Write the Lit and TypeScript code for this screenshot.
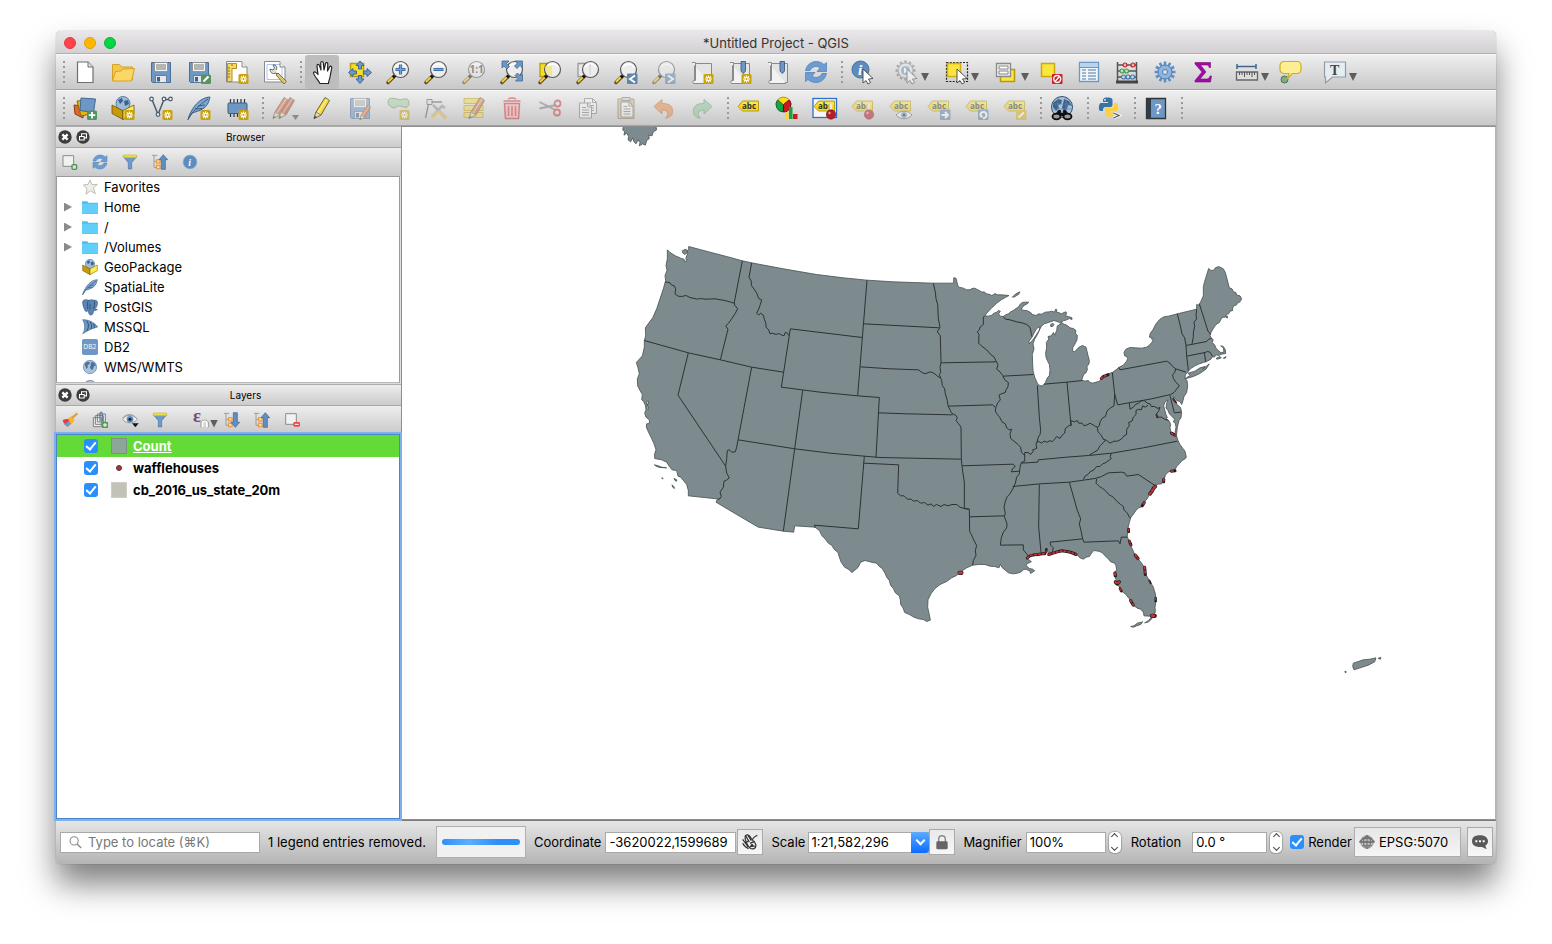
import { LitElement, html, svg, css, nothing } from "lit";
import { customElement, property } from "lit/decorators.js";
import { classMap } from "lit/directives/class-map.js";

/* ---------- shared icon parts ---------- */

const lens = (inner: unknown = nothing) => svg`
  <path d="M2 22.500L8 16.500" stroke="#5d5226" stroke-width="3.600" stroke-linecap="round"/>
  <path d="M2 22L7 17" stroke="#f7cf3a" stroke-width="2"/>
  <path d="M7 17.500L9.500 15" stroke="#111" stroke-width="3"/>
  <circle cx="14.500" cy="9.500" r="8" fill="#ededed" stroke="#5a5a5a" stroke-width="1.200"/>
  <path d="M9 7a6.500 6.500 0 0 1 11 0" fill="none" stroke="#fff" stroke-width="1.500"/>${inner}`;

const badge = svg`
  <rect x="13.500" y="14" width="10" height="10" rx="1.500" fill="#c9a20a"/>
  <path d="M18.500 15.500v7M15 19h7M16 16.500l5 5M21 16.500l-5 5" stroke="#fff" stroke-width="1.200"/>
  <circle cx="18.500" cy="19" r="1" fill="#c9a20a"/>`;

const tag = (text: string, extra: unknown = nothing) => svg`
  <path d="M1 10.500L5.500 5H21.500V15H5.500Z" fill="#f6d722" stroke="#b99b10"/>
  <path d="M6 6h15v3H5z" fill="#fbe96a" opacity=".7"/>
  <text x="5" y="13" class="tagText">${text}</text>${extra}`;

const floppy = svg`
  <path d="M2.500 2.500h19v20h-18l-1-1z" fill="#6d97c4" stroke="#4b6f95"/>
  <path d="M5.500 2.500h13v9h-13z" fill="#f3f3f0" stroke="#8a8a85" stroke-width=".8"/>
  <path d="M7 5h10M7 7h10M7 9h10" stroke="#777" stroke-width="1"/>
  <path d="M6.500 15.500h11v7h-11z" fill="#e8e8e6" stroke="#4b6f95" stroke-width=".8"/>
  <path d="M8 17h3v4.500h-3z" fill="#3f618a"/>`;

const globe = svg`
  <circle cx="12" cy="12" r="10" fill="#a9c3dd" stroke="#5a80aa"/>
  <path d="M4 7l4-3 4 1-1 3-3 1 1 3-2 3-2-4zM14 4l5 2 2 5-3-1-1 4-2 3-3-4 1-4z" fill="#4b709a"/>`;

const cursor = svg`<path d="M12 9v14l3-2.500 2 3.500 2.500-1.400-2-3.600 4.500-.5z" fill="#fff" stroke="#444" stroke-width=".9"/>`;

const gift = svg`
  <circle cx="12" cy="7.500" r="7" fill="#9dbcdc" stroke="#456a93" stroke-width=".8"/>
  <path d="M7 4l4-2 1 3-3 3zM13 5l4-1 1 4-4 2z" fill="#3d6189"/>
  <path d="M1 9l10.500 5.500L12 23.500 1 17.500z" fill="#c99a06" stroke="#6d5508" stroke-width=".8"/>
  <path d="M23 9l-11 5.500v9l11-6z" fill="#fbee55" stroke="#6d5508" stroke-width=".8"/>`;

const feather = svg`
  <path d="M1 23.500C3 16 8 8 14 4c3-2 7-3 9-3-1 4-2 8-6 11-4 3-9 4-12 5z" fill="#7ea6d0" stroke="#3c5f86"/>
  <path d="M1 23.500C5 16 12 9 21 3M8 13l7-.5M11 10l7-1" fill="none" stroke="#365476" stroke-width=".9"/>`;

const refresh = svg`
  <path d="M1.500 10.500C3 4 8 1.500 12 1.500c3 0 6 1 8 3l2.500-2V11.500h-9.500l3-3.500c-3-2.500-8-2-10 2.500z" fill="#6b9dd4" stroke="#4a7cb4" stroke-width=".7"/>
  <path d="M22.500 13.500c-1.500 6.500-6.500 9-10.500 9-3 0-6-1-8-3l-2.500 2V12.500h9.500l-3 3.500c3 2.500 8 2 10-2.500z" fill="#6b9dd4" stroke="#4a7cb4" stroke-width=".7"/>`;

const funnel = svg`
  <path d="M2 4h20l-7.500 9v9.500h-5V13z" fill="#6d9bcd" stroke="#4c76a4"/>
  <path d="M2 1.500h20v4H2z" fill="#f2dd3f" stroke="#c2ae22" stroke-width=".8"/>`;

const treeLines = svg`
  <path d="M0 2h8M3 2v18h5M3 11h5" fill="none" stroke="#999" stroke-width="1.400"/>
  <path d="M7 8.500h5v5H7zM7 17h5v5H7z" fill="#ffe1b5" stroke="#e8902a" stroke-width="1.600"/>`;

const pencil = (dx: number, fill: string) => svg`
  <g transform="translate(${dx} 0)">
    <path d="M4 22.500L6 16 15 1.500l4.500 3L11 19z" fill="${fill}" stroke="#5c5634" stroke-width=".9"/>
    <path d="M8 17L17 3" stroke="#fff" stroke-opacity=".5" stroke-width="1.300"/>
    <path d="M4 22.500L6 16l5 3z" fill="#e9d6ae" stroke="#665" stroke-width=".7"/>
    <path d="M4 22.500l.8-2.600 1.800 1.200z" fill="#222"/>
  </g>`;

const page = (x: number, y: number) => svg`
  <path d="M${x} ${y}h8l4 4v11h-12z" fill="#f3f3f1" stroke="#777"/>
  <path d="M${x + 8} ${y}v4h4M${x + 2.5} ${y + 7}h7M${x + 2.5} ${y + 9.500}h7M${x + 2.5} ${y + 12}h7M${x + 2.5} ${y + 4.500}h4" fill="none" stroke="#777"/>`;

const bookPage = svg`
  <path d="M4.500 3.500h17v19h-17z" fill="#e4e4e4" stroke="#8a8a8a"/>
  <path d="M2 2.500h3.500v18H3.500a2 2 0 0 0 0 3H20" fill="#f2f2f2" stroke="#8a8a8a"/>`;

const ribbon = (x: number) => svg`<path d="M${x} 1.500h4.500v9.500l-2.200 2.500-2.300-2.500z" fill="#6d97c4" stroke="#3c5f86" stroke-width=".9"/>`;

const pin = svg`
  <path d="M17.500 8v8" stroke="#eee" stroke-width="2.500"/><path d="M16 8v7" stroke="#777" stroke-width=".6"/>
  <circle cx="18" cy="18.500" r="4.700" fill="#b51d25" stroke="#7c1218" stroke-width=".6"/><circle cx="16.500" cy="17" r="1.200" fill="#e99"/>`;

const blueBox = (d: string) => svg`
  <rect x="13" y="13.500" width="10.500" height="10.500" rx="1" fill="#5e86ad"/><path d="${d}" fill="none" stroke="#fff" stroke-width="2"/>`;

const gearTeeth = (r1: number, r2: number) =>
  Array.from({ length: 12 }, (_, i) => {
    const a = (i * Math.PI) / 6;
    return `M${12 + r1 * Math.cos(a)} ${12 + r1 * Math.sin(a)}L${12 + r2 * Math.cos(a)} ${12 + r2 * Math.sin(a)}`;
  }).join("");

const ICONS: Record<string, unknown> = {
  newProject: svg`<path d="M4.500 2h10.500l5 5v15.500h-15.500z" fill="#fff" stroke="#6f6f6f" stroke-width="1.200"/><path d="M15 2v5h5" fill="#e4e4e4" stroke="#6f6f6f"/>`,
  open: svg`<path d="M1.500 20.500V4.500h7L10.500 7h11v13" fill="#f1c84b" stroke="#d5a321"/><path d="M1.500 21L4.500 11.500 10 11l2-2 11.500-.5L20.500 21z" fill="#fbd866" stroke="#d5a321"/>`,
  save: floppy,
  saveAs: svg`${floppy}<rect x="14" y="14.500" width="10" height="9.500" rx="1.500" fill="#5b9160"/><path d="M16.500 21.500l5-5" stroke="#fff" stroke-width="2.200"/>`,
  layout: svg`<path d="M1.500 1.500h15l5.500 5.500v15H1.500z" fill="#fff" stroke="#888"/><path d="M17 1.500V7h5" fill="#eee" stroke="#888"/><path d="M2.500 3.500h9v5H7v13H2.500z" fill="#f5d76a" stroke="#b98f1a"/><path d="M3 8h2M3 11h2M3 14h2M3 17h2M7 4v2" stroke="#8b6b12"/>${badge}`,
  layoutManager: svg`<path d="M1.500 1.500h15l5.500 5.500v15H1.500z" fill="#fff" stroke="#888"/><path d="M4 4.500h15v15H4z" fill="none" stroke="#a9c3ee"/><path d="M17 1.500V7h5" fill="#eee" stroke="#888"/><path d="M13 10c2-3 0-5.500-3-5l1.500 3-1.500 2-3-1c0 4 3 5.500 6 4l2.500 2.500" fill="#ddd" stroke="#666"/><path d="M15 13l8.500 8.500-2.500 2.500-8-9z" fill="#dcc675" stroke="#86712e"/>`,
  pan: svg`<path d="M9 23.500C7 20 3 15.500 2.500 13c.5-2 2.500-1 4.500 1.500L6 6c0-2 2-2 2.500-.3L10 10 9.700 3c.2-2 2.300-2 2.600 0L13 10l1.500-6.500c.7-1.700 2.500-1 2.300.8L16.500 11l2-4c1-1.500 2.500-.5 2.200 1L19 17c-.5 3-1.500 4-1.500 6.500z" fill="#fff" stroke="#222" stroke-width="1.200" stroke-linejoin="round" transform="translate(1 0)"/>`,
  panSelection: svg`<path d="M2.500 3.500h13v13h-13z" fill="#f7e11f" stroke="#bb9a10" stroke-width="1.500"/><path d="M12 1l4 4.500h-2.500V9h-3V5.500H8zM12 23.500l-4-4.500h2.500v-3.500h3V19H16zM.5 12.500L5 8.500V11h3.500v3H5v2.500zM23.500 12.500l-4.500-4V11h-3.500v3H19v2.500z" fill="#6d9bcd" stroke="#3c6796"/>`,
  zoomIn: lens(svg`<path d="M14.500 4.500v10M9.500 9.500h10" stroke="#3f6fa5" stroke-width="3.200"/><path d="M14.500 5v9M10 9.500h9" stroke="#79a4d4" stroke-width="1.200"/>`),
  zoomOut: lens(svg`<path d="M9.500 9.500h10" stroke="#3f6fa5" stroke-width="3"/><path d="M10 9.500h9" stroke="#79a4d4"/>`),
  zoomNative: lens(svg`<text x="7.500" y="13" class="bold9">1:1</text>`),
  zoomFull: lens(svg`<path d="M2 1h7L6.500 3.500l3 3-2.500 2.500-3-3L2 8zM22.500 1v7L20 5.500l-3 3L14.500 6l3-3L15 1zM22.500 21h-7l2.500-2.500-3-3 2.500-2.500 3 3 2-2z" fill="#6d97c4" stroke="#3f6894" stroke-width=".8"/>`),
  zoomSelection: svg`<path d="M2 3.500h12v13H2z" fill="#f7e11f" stroke="#bb9a10" stroke-width="1.300"/>${lens(svg`<path d="M7.500 6h6.500v10a8 8 0 0 1-6.500-10" fill="#f3e47a" opacity=".8"/>`)}`,
  zoomLayer: svg`<path d="M2 3.500h12v13H2z" fill="#e8e8e8" stroke="#999" stroke-width="1.300"/>${lens(svg`<path d="M14 4v11" stroke="#ccc"/>`)}`,
  zoomLast: lens(blueBox("M21 15.500L16 19l5 3.500")),
  zoomNext: lens(blueBox("M16 15.500L21 19l-5 3.500")),
  newBookmark: svg`${bookPage}${badge}`,
  newView: svg`${bookPage}${ribbon(13)}${badge}`,
  bookmarks: svg`${bookPage}${ribbon(14)}`,
  refresh,
  identify: svg`<circle cx="9.500" cy="9.500" r="8.500" fill="#5d8cc0" stroke="#43709f"/><text x="7" y="15" class="serifI">i</text>${cursor}`,
  action: svg`<path d="${gearTeeth(7, 10)}" transform="translate(-1.500 -1.500)" stroke="#777" stroke-width="2.500"/><circle cx="10.500" cy="10.500" r="7.500" fill="#e4e4e4" stroke="#888" stroke-width="1.200"/><circle cx="10.500" cy="10.500" r="4.500" fill="#6d97c4"/><path d="M9 7.500l4.500 3-4.500 3z" fill="#fff"/>${cursor}`,
  select: svg`<path d="M1.500 2.500h21v19h-21z" fill="none" stroke="#222" stroke-width="1.200" stroke-dasharray="2 1.300"/><path d="M2.500 3.500h13v13h-13z" fill="#fbe63e" stroke="#d2ae12" stroke-width="1.500"/>${cursor}`,
  selectForm: svg`<path d="M5.500 9.500h14v12h-14z" fill="#fbe63e" stroke="#b89812" stroke-width="1.500"/><path d="M1.500 3.500h14v13h-14z" fill="#eee" stroke="#8b8b8b" stroke-width="1.300"/><path d="M4 6h9v3H4zM4 11h9v3H4z" fill="#fff" stroke="#888"/>`,
  deselect: svg`<path d="M2.500 3.500h13v13h-13z" fill="#fbe63e" stroke="#c9a712" stroke-width="1.500"/><rect x="13" y="14" width="10.500" height="10" rx="1" fill="#d21f25"/><circle cx="18.200" cy="19" r="3.500" fill="none" stroke="#fff" stroke-width="1.400"/><path d="M16 21.500l4.500-5" stroke="#fff" stroke-width="1.300"/>`,
  table: svg`<path d="M2.500 2.500h19v19h-19z" fill="#f3f6f9" stroke="#6d97c4" stroke-width="1.300"/><path d="M3 3h18v4H3z" fill="#b7d3ee"/><path d="M2.500 7.500h19" stroke="#6d97c4"/><path d="M5 10h4M11 10h8M5 13h4M11 13h8M5 16h4M11 16h8M5 19h4M11 19h8" stroke="#4b76a5" stroke-width="1.200"/>`,
  abacus: svg`<path d="M2.500 2v20M21.500 2v20M2.500 5h19M2.500 11h19M2.500 17h19" fill="none" stroke="#555" stroke-width="1.500"/><path d="M1 22h22" stroke="#444" stroke-width="3"/><g stroke-width="1.200"><g fill="#f2b0b0" stroke="#c8232b"><circle cx="10" cy="5" r="2"/><circle cx="18" cy="5" r="2"/></g><g fill="#bfe3c0" stroke="#4a9a50"><circle cx="7" cy="11" r="2"/><circle cx="11.500" cy="11" r="2"/></g><g fill="#c6dbee" stroke="#4676a8"><circle cx="8.500" cy="17" r="2"/><circle cx="13" cy="17" r="2"/><circle cx="17.500" cy="17" r="2"/></g></g>`,
  gear: svg`<path d="${gearTeeth(6, 10.500)}" stroke="#5f90c6" stroke-width="2.600"/><circle cx="12" cy="12" r="7" fill="#8fb4dd" stroke="#4f80b8"/><circle cx="12" cy="12" r="2.500" fill="#ddd" stroke="#4f80b8"/>`,
  sigma: svg`<path d="M4 2.500h15.500v5h-1.500c0-2-1-2.500-3-2.500H9.500l5.500 7-6 7h6.500c2 0 3-1 3.500-3h1.500l-1 6H4v-1.500L11 12 4 4z" fill="#a30aa5" stroke="#7a077c" stroke-width=".6"/>`,
  measure: svg`<path d="M2 6.500h19M2 4v5M21 4v5" stroke="#3f6590" stroke-width="1.500"/><path d="M1.500 12h21v8h-21z" fill="#ddd" stroke="#666" stroke-width="1.300"/><path d="M4.500 12v3M7 12v3M9.500 12v5M12 12v3M14.500 12v3M17 12v5M19.500 12v3" stroke="#555"/>`,
  tip: svg`<circle cx="5.500" cy="19.500" r="3.500" fill="#7fae82" stroke="#4d7350"/><path d="M5 1.500h13a4 4 0 0 1 4 4v4a4 4 0 0 1-4 4h-4.500L8 19l2-5.500H5a4 4 0 0 1-4-4v-4a4 4 0 0 1 4-4z" fill="#fbee93" stroke="#cfac1d" stroke-width="1.200"/>`,
  annotation: svg`<path d="M1.500 2h21v15H9.500L2.500 23V17h-1z" fill="#e5edf3" stroke="#8f9ba5" stroke-width="1.200"/><text x="7" y="14.500" class="serifT">T</text>`,

  dataSource: svg`<path d="M1 9l10 1-1 12-8-4z" fill="#d96a2d" stroke="#8c3f15"/><path d="M4 5l12-1 1 14-9 2z" fill="#eab40e" stroke="#8a6a08"/><path d="M8 2l14.500 1-2 13.500L7 14.500z" fill="#6d97c4" stroke="#44688f"/><rect x="14" y="14.500" width="10" height="9.500" rx="1.500" fill="#4f9560"/><path d="M19 16v6.500M15.800 19.200h6.500" stroke="#fff" stroke-width="1.800"/>`,
  geopackageNew: svg`${gift}${badge}`,
  shapefile: svg`<path d="M3 3.500L9 18.500 15 3.500h6" fill="none" stroke="#4a5d70" stroke-width="1.500"/><g fill="#eee" stroke="#4a5d70" stroke-width="1.200"><circle cx="2.500" cy="3" r="1.800"/><circle cx="9" cy="18.500" r="1.800"/><circle cx="15" cy="3" r="1.800"/><circle cx="21.500" cy="3" r="1.800"/></g>${badge}`,
  spatialiteNew: svg`${feather}${badge}`,
  memory: svg`<path d="M5.500 3v18M9 3v18M12.500 3v18M16 3v18M19.500 3v18" stroke="#333" stroke-width="1.200"/><rect x="3" y="7" width="19" height="10.500" rx="1" fill="#6d97c4" stroke="#3c5f86"/>${badge}`,
  edits: svg`${pencil(-3, "#d4572b")}${pencil(3, "#b94a2a")}`,
  pencil: pencil(0, "#f4db3a"),
  saveEdits: svg`${floppy}<g transform="translate(9 8) scale(.7)">${pencil(0, "#e0662f")}</g>`,
  addPolygon: svg`<path d="M2 6c0-5 6-4 10-2.500S21 0 22.500 5s-1 7-5 6-4-2-7 0-8 0-8.500-5z" fill="#a6cfa6" stroke="#5e8f60"/>${badge}`,
  vertex: svg`<path d="M1.500 22L5 6h13" fill="none" stroke="#555" stroke-width="1.300"/><path d="M3 3.500h5v5H3z" fill="#ddd" stroke="#555"/><path d="M8 21L18 10l3 2M9 9l13 13" stroke="#8f8f8f" stroke-width="2.500"/><path d="M14 15l8 8" stroke="#e6b93c" stroke-width="3"/><path d="M8 22l6-6" stroke="#e6b93c" stroke-width="3"/>`,
  multiEdit: svg`<path d="M2 2.500h19v5H2zM2 9.500h19v5H2zM2 16.500h19v5H2z" fill="#efd84a" stroke="#b69c1f"/><g transform="translate(3 0)">${pencil(0, "#d4672b")}</g>`,
  trash: svg`<path d="M4.500 7.500h15l-1 15h-13z" fill="#f2b4b4" stroke="#cf2c36" stroke-width="1.500"/><path d="M3.500 5h17M8.500 3.500c0-2 7-2 7 0M8.500 10v10M12 10v10M15.500 10v10" fill="none" stroke="#cf2c36" stroke-width="1.500"/>`,
  cut: svg`<path d="M1.500 6l16 8M1.500 12.500L18 9" stroke="#777" stroke-width="1.800"/><circle cx="19.500" cy="7.500" r="3" fill="none" stroke="#c8383d" stroke-width="1.800"/><circle cx="19" cy="16.500" r="3" fill="none" stroke="#c8383d" stroke-width="1.800"/>`,
  copy: svg`${page(8.5, 2.5)}${page(3.5, 7)}`,
  paste: svg`<path d="M4 3h16v19.500H4z" fill="#d9bd82" stroke="#8c7342"/><path d="M6.500 5.500h11V20h-11z" fill="#eee" stroke="#999"/>${page(7, 6)}<path d="M8 1.500h8v3H8z" fill="#ccc" stroke="#777"/>`,
  undo: svg`<path d="M2 10.500L10 3.500v4c8 0 11 3 10.500 9-.3 3-3 5.500-7 5.500 3-2 4-8-3.500-8v4z" fill="#e28a4c" stroke="#c46a2c"/>`,
  redo: svg`<path d="M22 10.500L14 3.500v4c-8 0-11 3-10.500 9 .3 3 3 5.500 7 5.500-3-2-4-8 3.500-8v4z" fill="#8fc59a" stroke="#5f9f6c"/>`,

  label: tag("abc"),
  diagram: svg`<path d="M8.500 8.500L2.500 4A7.500 7.500 0 0 0 8 16z" fill="#14a345" stroke="#0a6a2a"/><path d="M8.500 8.500L3 3.500a7.500 7.500 0 0 1 11 0z" fill="#fbdc17" stroke="#b59a0a"/><path d="M8.500 8.500l6-4.500a7.500 7.500 0 0 1-6 12z" fill="#cb1a1f" stroke="#80090d"/><path d="M10 16.500h3.500V23H10z" fill="#fbdc17"/><path d="M14 11h3.500v12H14z" fill="#14a345"/><path d="M18 18h4.500v5H18z" fill="#cb1a1f"/>`,
  labelPin: svg`<rect x="0" y="2.500" width="23.500" height="19" fill="#f7f7f7" stroke="#2a6fd2" stroke-width="1.300"/>${tag("ab", pin)}`,
  labelPinOff: tag("ab", pin),
  labelShow: tag("abc", svg`<path d="M7 19c4-5 12-5 16 0-4 5-12 5-16 0z" fill="#f4f4f4" stroke="#666"/><circle cx="15" cy="19" r="3" fill="#6d97c4"/><circle cx="15" cy="19" r="1.300" fill="#222"/>`),
  labelMove: tag("abc", blueBox("M14.500 19h6M18 16l3 3-3 3")),
  labelRotate: tag("abc", blueBox("M18 22.500c5-1 4-6.500.5-6.500s-4 4-1 5")),
  labelEdit: tag("abc", svg`<rect x="13" y="14" width="10.500" height="10" rx="1" fill="#d9b21a"/><path d="M15.500 21.500l5.500-5" stroke="#fff" stroke-width="2"/>`),
  search: svg`<circle cx="12" cy="11" r="10.500" fill="#a9c3dd" stroke="#33506f"/><path d="M3 7l5-4 4 1-1 4-3 1 1 3-3 3-3-4zM14 3l5 2 3 5-4-1-1 4-2 3-3-4 1-4z" fill="#3d6189"/><path d="M2 8h20M2 13h20M8 2v16M16 2v16" stroke="#6287ae" stroke-width=".7"/><path d="M4.500 20l4-5.500h2l.5 3h2l.5-3h2l4 5.500" fill="#111" stroke="#111"/><ellipse cx="6.500" cy="20.500" rx="4" ry="2.800" fill="#999" stroke="#0a0a0a" stroke-width="1.800"/><ellipse cx="17.500" cy="20.500" rx="4" ry="2.800" fill="#999" stroke="#0a0a0a" stroke-width="1.800"/>`,
  python: svg`<path d="M6 6V4c0-2 2-2.500 4.500-2.500S15.500 2 15.500 4v4.500c0 2-1 2.500-3 2.500H8.500C6.500 11 6 12 6 15H3.500C1 15 1.500 7 4 7h7V6z" fill="#3973a6"/><circle cx="8" cy="3.800" r=".9" fill="#fff"/><path d="M17 7h2c3 0 3 8 0 8.500h-6.500v1h4.500v2c0 3-9 3-9 0v-4.500c0-2 1-2.500 3-2.500h3.500c2 0 2.500-1 2.500-4.500z" fill="#fbd13f"/><path d="M16.500 17l5.500 2.500-5.500 2.500" fill="none" stroke="#fff" stroke-width="3"/><path d="M16.500 17l5.500 2.500-5.500 2.500" fill="none" stroke="#555" stroke-width="1.300"/>`,
  help: svg`<path d="M2.500 2.500h19v20h-19z" fill="#6d97c4" stroke="#333" stroke-width="1.300"/><path d="M2.500 2.500H7v20H2.500z" fill="#2f3c49"/><text x="10.500" y="18" class="serifQ">?</text>`,

  addLayer: svg`<path d="M1.500 2.500h16v16h-16z" fill="#f1f1f1" stroke="#8b8b8b" stroke-width="1.500"/><rect x="15" y="16" width="7" height="7" rx="1.500" fill="#cfe5cf" stroke="#4e9153" stroke-width="2"/>`,
  funnel,
  collapse: svg`${treeLines}<path d="M17 1l6.500 7.500H20V23h-6V8.500h-3.500z" fill="#5f8fc4" stroke="#38608c"/>`,
  expand: svg`${treeLines}<path d="M17 23l6.500-7.500H20V1h-6v14.500h-3.500z" fill="#5f8fc4" stroke="#38608c"/>`,
  info: svg`<circle cx="12" cy="12" r="10.500" fill="#5d8cc0" stroke="#9db9d8"/><text x="9.500" y="18.500" class="serifI">i</text>`,
  brush: svg`<path d="M1 12l9-2 5 6-6 6c-4-1-7-4-8-10z" fill="#e8693a"/><path d="M3 18l6-6 4 3-5 7z" fill="#58a4e4"/><path d="M1 12l9-2 2 2-7 6z" fill="#e33c3c"/><path d="M9 10l5-4 5 6-5 7z" fill="#f6b632"/><path d="M15 9l8-7" stroke="#dfa04a" stroke-width="3.500"/>`,
  group: svg`<path d="M2 8.500h12V22H2zM5 5.500h12v13H5zM8 3h12v12H8z" fill="#eee" stroke="#777" stroke-width="1.400"/><path d="M12 14V3c0-4 3.500-4 3.500 0v11" fill="none" stroke="#4f6f90" stroke-width="1.600"/><rect x="15" y="15" width="9" height="9" fill="#5b9b60"/><path d="M19.500 16.500v6M16.500 19.500h6" stroke="#fff" stroke-width="1.500"/>`,
  eye: svg`<path d="M1 11c5-8 16-8 22 0-6 7-17 7-22 0z" fill="#eef2f5" stroke="#888" stroke-width="1.200"/><path d="M1 9c5-7 16-7 21 1" fill="none" stroke="#999" stroke-width="1.500"/><circle cx="12" cy="11" r="5" fill="#5d8cc0"/><circle cx="12" cy="11" r="2.300" fill="#16283d"/><path d="M15 17h10l-5 6z" fill="#111"/>`,
  epsilon: svg`<text x="0" y="15" class="epsilon">ε</text><path d="M14 22.500v-6c0-5 7-5 7 0v6" fill="none" stroke="#fff" stroke-width="3"/><path d="M12 23v-6.500c0-6 11-6 11 0V23" fill="none" stroke="#888" stroke-width="1.200"/>`,
  remove: svg`<path d="M2.500 2.500h16v16h-16z" fill="#f1f1f1" stroke="#8b8b8b" stroke-width="1.500"/><rect x="14" y="15" width="10" height="7" rx="2" fill="#e8474d"/><path d="M16 18.500h6" stroke="#fff" stroke-width="1.500"/>`,
  star: svg`<path d="M12 1.500l3 7 8-.5-6 5.500 3 8.500-7.500-4.500L6 23l1.500-8.500L2 9l7-1z" fill="#efefea" stroke="#b5b5a6" stroke-width="1.300"/>`,
  folder: svg`<path d="M0 3.500h8l1.500 2H24v17H0z" fill="#4fc0f1"/><path d="M0 7.500h24v14.500H0z" fill="#62cefa"/>`,
  geopackage: gift,
  spatialite: feather,
  postgis: svg`<path d="M1 4c1-4 7-3 9-2 3-1 6-1 8 0 4-1 6 2 5 6-1 4-2 6-4 7l4 1-6 2c0 4-1 6-4 6-3 0-3-4-3.500-7-3 4-5 1-6-2C2 12 1 8 1 4z" fill="#5b85b5" stroke="#345782"/><path d="M10 2c-3 3-1 7-1.500 13M18 2c2 5 0 9-1 13M12 7v9" fill="none" stroke="#2c4c74" stroke-width="1.300"/>`,
  mssql: svg`<path d="M1 1c8 0 17 3 22.500 11C18 13 9 17 1 22c4-5 4-14 0-21z" fill="#6d97c4" stroke="#44688f"/><path d="M7 2c4 6 3 12 0 16M12 4c3 4 3 8 1 11M17 7c2 3 2 5 1 7" fill="none" stroke="#2f4f76" stroke-width="1.500"/>`,
  db2: svg`<rect width="24" height="24" rx="3" fill="#6d97c4"/><text x="2" y="15.500" class="db2">DB2</text>`,
  globe,
  lock: svg`<path d="M7 12V8c0-7 10-7 10 0v4" fill="none" stroke="#8b8b8b" stroke-width="2.200"/><rect x="3.500" y="11" width="17" height="12" rx="2" fill="#666"/>`,
  mouse: svg`<path d="M6 2c3-2 6 1 8 5 1 3 7 5 7 10s-5 7-9 4S2 5 6 2z" fill="#eee" stroke="#333" stroke-width="1.800"/><path d="M5 2l6 10M9 2l5 8M1 8l8 11M12 14l7-3M12 19l8-1M15 9l3-4 5-3M1 14c3 6 6 7 9 8M10 10l-5 4" fill="none" stroke="#333" stroke-width="1.800"/><circle cx="15" cy="17" r="2" fill="#333"/>`,
  crs: svg`<circle cx="12" cy="12" r="9.500" fill="#bbb" stroke="#777"/><path d="M12 2v20M3 12h18M5 6.500h14M5 17.500h14M12 2c-7 6-7 14 0 20M12 2c7 6 7 14 0 20" fill="none" stroke="#666" stroke-width="1.300"/><path d="M0 12h24M1 11L12 4l11 7" fill="none" stroke="#666" stroke-width="1.600"/>`,
  message: svg`<path d="M12 2c8 0 12 4 12 9 0 3-1.500 5-4 6.500l2 5.500-7-3.500C6 20.500 0 17 0 11s4-9 12-9z" fill="#5a5a5a"/><path d="M5 9.500h3v3H5zM10.500 9.500h3v3h-3zM16 9.500h3v3h-3z" fill="#fff"/>`,
  magnify: svg`<circle cx="9.500" cy="9" r="7.500" fill="none" stroke="#8b8b8b" stroke-width="2"/><path d="M14.500 14.500L22.500 22" stroke="#8b8b8b" stroke-width="2.600"/>`,
  close: svg`<circle cx="12" cy="12" r="11.500" fill="#3d3d3d"/><path d="M7.500 7.500l9 9M16.500 7.500l-9 9" stroke="#fff" stroke-width="4"/>`,
  float: svg`<circle cx="12" cy="12" r="11.500" fill="#3d3d3d"/><path d="M6 11h8v6H6zM9.500 11V6.500H18v7h-4" fill="none" stroke="#fff" stroke-width="1.800"/>`,
};

@customElement("q-icon")
export class QIcon extends LitElement {
  @property() name = "";
  static styles = css`
    :host { display: block; width: 24px; height: 24px; flex: none; }
    svg { display: block; width: 100%; height: 100%; overflow: visible; }
    text { font-family: "Open Sans", sans-serif; }
    .tagText { font-size: 8px; font-weight: 700; fill: #333; }
    .bold9 { font-size: 10px; font-weight: 700; fill: #333; }
    .serifI { font: italic 700 15px "Liberation Serif", serif; fill: #fff; }
    .serifT { font: 700 14px "Liberation Serif", serif; fill: #444; }
    .serifQ { font: 700 15px "Liberation Serif", serif; fill: #fff; }
    .epsilon { font: 700 28px "Liberation Serif", serif; fill: #74506f; }
    .db2 { font-size: 10px; fill: #fff; }
  `;
  render() {
    return html`<svg viewBox="0 0 24 24" fill="none" aria-hidden="true">${ICONS[this.name] ?? nothing}</svg>`;
  }
}

/* ---------- toolbars ---------- */

type Tool = { sep?: boolean; icon?: string; title?: string; menu?: boolean; mini?: boolean; active?: boolean; off?: boolean };
const sep: Tool = { sep: true };
const t = (icon: string, title: string, more: Tool = {}): Tool => ({ icon, title, ...more });
const off = { off: true };

const PROJECT_TOOLS: Tool[] = [
  sep, t("newProject", "New Project"), t("open", "Open Project"), t("save", "Save Project"), t("saveAs", "Save Project As"),
  t("layout", "New Print Layout"), t("layoutManager", "Layout Manager"),
  sep, t("pan", "Pan Map", { active: true }), t("panSelection", "Pan Map to Selection"), t("zoomIn", "Zoom In"), t("zoomOut", "Zoom Out"),
  t("zoomNative", "Zoom to Native Resolution", off), t("zoomFull", "Zoom Full"), t("zoomSelection", "Zoom to Selection"),
  t("zoomLayer", "Zoom to Layer"), t("zoomLast", "Zoom Last"), t("zoomNext", "Zoom Next", off), t("newBookmark", "New Map View"),
  t("newView", "New Bookmark"), t("bookmarks", "Show Bookmarks"), t("refresh", "Refresh"),
  sep, t("identify", "Identify Features"), t("action", "Run Feature Action", { menu: true, off: true }), t("select", "Select Features", { menu: true }),
  t("selectForm", "Select by Form", { menu: true }), t("deselect", "Deselect Features"), t("table", "Open Attribute Table"),
  t("abacus", "Field Calculator"), t("gear", "Processing Toolbox"), t("sigma", "Statistical Summary"), t("measure", "Measure Line", { menu: true }),
  t("tip", "Map Tips"), t("annotation", "Text Annotation", { menu: true }),
];

const LAYER_TOOLS: Tool[] = [
  sep, t("dataSource", "Data Source Manager"), t("geopackageNew", "New GeoPackage Layer"), t("shapefile", "New Shapefile Layer"),
  t("spatialiteNew", "New SpatiaLite Layer"), t("memory", "New Temporary Layer"),
  sep, t("edits", "Current Edits", { off: true, mini: true }), t("pencil", "Toggle Editing"), t("saveEdits", "Save Layer Edits", off),
  t("addPolygon", "Add Feature", off), t("vertex", "Vertex Tool", off), t("multiEdit", "Modify Attributes", off), t("trash", "Delete Selected", off),
  t("cut", "Cut Features", off), t("copy", "Copy Features", off), t("paste", "Paste Features", off), t("undo", "Undo", off), t("redo", "Redo", off),
  sep, t("label", "Layer Labeling"), t("diagram", "Layer Diagrams"), t("labelPin", "Highlight Pinned Labels"), t("labelPinOff", "Pin Labels", off),
  t("labelShow", "Show Labels", off), t("labelMove", "Move Label", off), t("labelRotate", "Rotate Label", off), t("labelEdit", "Change Label", off),
  sep, t("search", "MetaSearch"), sep, t("python", "Python Console"), sep, t("help", "Help Contents"), sep,
];

@customElement("q-toolbar")
export class QToolbar extends LitElement {
  @property({ attribute: false }) tools: Tool[] = [];
  static styles = css`
    :host {
      display: flex; align-items: center; height: 36px; box-sizing: border-box; padding-left: 1px;
      background: linear-gradient(#efefef, #c8c8c8); border-bottom: 1px solid #a3a3a3; border-top: 1px solid #f8f8f8;
    }
    .handle { width: 9px; flex: none; display: flex; justify-content: flex-end; }
    .dots { width: 2px; height: 22px; margin-right: 1px; background: repeating-linear-gradient(#999 0 2px, transparent 2px 5px); }
    button {
      display: flex; align-items: center; justify-content: center; flex: none; width: 34px; height: 34px;
      margin: 0 2px; padding: 0; border: 0; border-radius: 3px; background: none; position: relative;
    }
    .menu { width: 50px; margin: 0; justify-content: flex-start; padding-left: 13px; }
    .active { background: #bdbdbd; }
    .faded { opacity: 0.5; }
    .arrow { width: 8px; height: 8px; background: #5d5d5d; clip-path: polygon(0 0, 100% 0, 50% 100%); margin: 10px 0 0 2px; flex: none; }
    .mini { position: absolute; right: 2px; bottom: 5px; width: 7px; height: 5px; background: #8b8b8b; clip-path: polygon(0 0, 100% 0, 50% 100%); }
  `;
  render() {
    return this.tools.map((tool) =>
      tool.sep
        ? html`<span class="handle"><span class="dots"></span></span>`
        : html`<button title=${tool.title} aria-label=${tool.title} class=${classMap({ active: !!tool.active, menu: !!tool.menu })}>
            <q-icon class=${classMap({ faded: !!tool.off })} name=${tool.icon}></q-icon>
            ${tool.menu ? html`<span class="arrow"></span>` : nothing}${tool.mini ? html`<span class="mini"></span>` : nothing}
          </button>`
    );
  }
}

/* ---------- map geometry, digitised at three units per pixel on three sheets ---------- */

type Sheet = [number, number];
const WEST: Sheet = [1830, 690];
const NORTH: Sheet = [2580, 780];
const SOUTH: Sheet = [2580, 1290];

const trace = ([ox, oy]: Sheet, pts: string) =>
  pts.trim().split(/\s+/).map((p) => {
    const [x, y] = p.split(",").map(Number);
    return `${x + ox},${y + oy}`;
  }).join(" ");

const MAINLAND = [
  trace(WEST, `172,58 180,66 190,72 198,77 206,80 214,84 222,86 224,94 229,93 228,84 230,76 233,70 231,62 236,56 236,48 300,65 350,78 397,91 425,97 520,115
    620,132 700,142 771,149`),
  trace(NORTH, `100,64 160,66 220,68 281,68 281,52 288,53 291,65 293,73 296,80 310,83 320,88 330,88 336,84 344,83 352,87 358,90 366,95 372,94 380,100 390,102 395,105
    401,102 405,99 412,103 425,103 447,105 436,111 425,117 410,128 401,137 395,142 383,155 374,166 385,167 395,164 402,158 410,155 415,150 421,152 416,160
    420,167 430,168 437,163 445,160 452,154 460,150 468,144 475,140 480,132 486,126 495,125 506,125 503,129 494,134 486,141 485,149 500,150 512,156
    517,162 528,165 536,160 545,161 556,155 568,154 575,152 583,155 587,146 590,147 590,155 598,157 604,160 612,156 618,154 620,160 615,166 625,168
    636,172 636,177 628,174 620,178 610,181 603,185 612,191 622,195 630,202 640,204 648,210 646,218 652,225 651,238 645,250 638,262 638,272 644,274
    651,266 657,260 668,255 678,260 681,272 684,285 688,300 687,310 681,318 682,328 677,338 672,340 668,350 665,359 675,362 685,360 690,366 697,368
    705,366 715,363 721,360 728,350 740,341 757,336 768,328 778,320 790,314 800,302 803,294 800,288 794,286 792,275 798,266 810,261 825,262 845,263
    860,260 868,254 875,246 880,238 874,235 877,231 868,230 871,218 878,209 888,190 900,176 912,169 925,167 952,160 1010,146 1010,132 1016,134
    1022,124 1030,106 1030,80 1033,66 1046,24 1052,29 1060,30 1066,22 1076,18 1090,25 1096,36 1108,82 1116,85 1120,93 1128,97 1130,104 1140,106 1145,115
    1140,124 1133,127 1130,133 1122,136 1118,142 1118,150 1110,152 1106,160 1101,160 1096,170 1088,170 1082,178 1078,186 1068,192 1060,204 1053,216
    1050,226 1055,234 1060,238 1056,246 1064,253 1068,263 1075,270 1083,277 1092,274 1090,262 1082,256 1090,258 1096,268 1097,279 1085,281 1076,285
    1068,283 1063,290 1058,288 1053,296 1040,303 1030,306 1018,310 1005,316 992,324 984,334 976,343 975,354 981,360 983,376 980,396 972,408 969,420 965,432
    960,423 950,420 943,410 940,408 944,420 952,432 962,442 965,456 963,472 957,480 952,500 950,520 945,516 948,500 946,488 940,484 944,476 936,468
    928,460 924,450 918,442 920,428 924,418 915,424 911,436 914,448 918,462 922,472 918,474 928,482 932,492 930,502 932,514 940,518 950,527 954,540
    960,552 968,563 975,572 978,585`),
  trace(SOUTH, `979,80 974,86 966,90 958,100 950,108 945,118 932,121 924,125 916,134 912,150 905,160 893,161 884,168 876,177 868,192 862,204 853,215 845,229
    836,232 828,240 818,254 812,262 808,276 803,296 802,318 806,330 812,345 820,362 826,376 835,386 845,398 852,409 854,424 862,440 871,455 880,470
    886,490 888,510 885,530 886,545 878,556 868,557 852,556 850,545 842,536 832,533 822,526 812,518 808,505 798,492 785,482 776,466 764,460 772,452
    766,444 768,436 762,428 770,418 768,406 764,398 752,394 744,384 735,376 726,366 715,362 702,360 696,366 688,378 678,380 670,386 660,382 650,372
    630,362 605,360 585,367 568,374 564,366 560,352 556,360 555,371 540,370 522,374 508,378 498,386 508,388 514,394 504,398 498,404 508,414 518,416 524,421
    512,429 510,422 500,417 492,416 484,424 472,428 460,430 445,427 436,419 426,411 421,401 417,412 404,408 390,407 375,402 355,402 338,404 320,412
    300,425 290,435 275,442 260,453 240,462 225,474 214,488 204,508 203,530 207,548 211,569 200,573 190,567 176,565 162,560 148,552 134,546 129,532
    122,522 121,508 118,496 106,487 100,474 92,465 88,450 80,440 75,428 66,413 58,408 50,398 38,396 15,390`),
  trace(WEST, `752,995 744,1011 726,1026 715,1016 704,1010 694,996 688,980 684,966 672,956 666,945 655,938 646,926 636,916 628,900 615,890 554,886 551,905
    520,902 445,890 380,852 318,815 322,806 330,806 235,796 235,780 230,762 222,752 212,740 204,737 200,720 186,718 178,708 170,695 155,688 134,684
    134,670 138,658 132,640 124,622 115,604 109,590 110,580 119,578 118,568 108,560 104,548 108,538 106,524 100,512 95,508 97,492 90,480 83,466 82,445
    88,430 84,412 79,396 88,386 97,376 103,350 103,330 107,316 106,292 118,275 128,262 140,235 150,205 160,175 167,150 165,135 171,120 168,105 172,85`),
].join(" ");

const BORDERS = [
  trace(WEST, "165,155 172,155 180,157 184,163 193,166 197,175 195,190 204,197 215,198 228,195 240,201 262,206 272,204 285,206 315,205 345,210 372,218"),
  trace(WEST, "397,91 373,215 374,224 383,235 375,250 365,265 356,278 347,286 354,296 331,388"),
  trace(WEST, "103,330 235,367 331,388 425,410 520,425"),
  trace(WEST, "235,367 204,494 347,707"),
  trace(WEST, "425,410 380,650 376,664 366,665 358,658 352,660 350,685 347,707 350,728 358,742 348,750 342,752 340,770 330,785 334,798 328,806"),
  trace(WEST, "384,628 555,655 660,668 763,677 810,681 1053,686"),
  trace(WEST, "578,480 520,902"),
  trace(WEST, "541,295 757,321"),
  trace(WEST, "541,295 514,470 630,485 743,496 808,501 798,680"),
  trace(WEST, "425,97 417,140 424,152 424,165 434,178 441,190 446,204 455,208 451,222 446,236 440,248 446,254 452,248 460,254 463,266 468,280 468,290 476,298 480,310 488,308 498,312 506,309 514,313 522,316 526,305 532,308 536,315"),
  trace(WEST, "771,149 743,496"),
  trace(NORTH, "12,190 238,202"),
  trace(NORTH, "1,319 90,325 176,328 184,335 195,340 210,334 222,338 232,347 241,352"),
  trace(NORTH, "56,457 140,460 278,463"),
  trace(WEST, "763,677 745,895 613,884 616,892"),
  trace(SOUTH, "11,98 116,103 113,188 122,196 132,196 142,206 154,206 160,212 172,210 182,218 194,216 204,224 214,220 220,228 230,222 243,228 252,222 264,226 276,222 290,222 300,230 313,234 328,236"),
  trace(NORTH, "220,68 226,95 228,115 233,132 235,175 240,200 232,214 241,226 243,306 240,320 242,335 238,342 245,360 247,375 254,385 256,400 262,420 264,436 275,458 288,465 292,472 288,480 296,490 303,500 304,595 306,618 313,665 313,745"),
  trace(NORTH, "243,307 408,304"),
  trace(NORTH, "264,437 398,433 405,440"),
  trace(NORTH, "374,166 370,170 370,192 360,200 358,208 352,214 357,222 356,248 364,256 375,264 384,272 392,282 403,290 407,300 414,312 410,326 420,334 428,345 434,358 445,366 444,378 438,388 436,396 424,400 417,404 421,418 414,426 408,438 406,452 412,462 420,472 426,484 436,490 440,502 448,508 455,506 450,520 452,534 462,542 474,552 482,560 484,575 494,585 494,595 494,602 484,606 480,620 478,640 470,650 466,668 460,682 450,700 442,708 436,722 432,740 436,758 433,768 441,790 440,802 430,815 424,832 421,854 490,853 490,868 500,880 506,888"),
  trace(NORTH, "430,347 520,342"),
  trace(NORTH, "430,168 436,176 450,178 470,184 486,187 500,192 508,198 512,208 514,222 518,232"),
  trace(NORTH, "532,375 538,470 542,510 540,522 535,530 530,548"),
  trace(NORTH, "621,365 633,495"),
  trace(NORTH, "552,371 621,365 667,360"),
  trace(NORTH, "494,585 494,576 504,576 512,582 520,572 518,568 530,564 528,550 534,542 545,548 552,542 562,545 570,540 576,544 584,536 590,528 600,534 606,524 614,518 616,504 626,496 634,494 632,480 644,484 652,480 656,488 666,488 672,496 684,492 690,488 704,496 712,500 718,496 720,484 728,472 736,468 742,450 752,442 762,436 764,400 757,336"),
  trace(NORTH, "712,500 714,514 722,522 730,536 740,540 750,548 762,542 772,542 784,536 792,526 800,522 800,506 808,496 806,486 816,482 820,470 828,462 828,450 836,446 844,448 848,436 856,440 864,434"),
  trace(NORTH, "764,400 773,433 870,416 932,402"),
  trace(NORTH, "808,428 810,446 820,440 826,432 836,428 842,422 852,420 862,428 870,430 874,438 884,438 894,444 900,440 896,452 888,462 892,470 904,470 914,476 926,480"),
  trace(NORTH, "776,320 780,328 850,315 920,302 930,308 938,318 947,325 978,335"),
  trace(NORTH, "947,325 944,336 938,342 940,354 948,366 958,375 950,386 942,396 932,402"),
  trace(NORTH, "930,405 943,457 963,455"),
  trace(NORTH, "952,160 962,200 966,220 974,232 978,255 980,287 984,320 984,330"),
  trace(NORTH, "1010,146 1008,165 1010,175 1002,185 1004,198 1000,215 1000,230 996,250"),
  trace(NORTH, "978,255 1040,243 1046,236 1055,234"),
  trace(NORTH, "1018,130 1044,212 1052,222"),
  trace(NORTH, "980,287 1035,276 1042,273 1050,275 1058,288"),
  trace(NORTH, "1033,276 1037,304"),
  trace(SOUTH, "484,98 533,95 535,88 620,80 685,75 755,68 850,52 952,32"),
  trace(SOUTH, "688,74 700,66 712,60 720,46 736,30 730,26"),
  trace(SOUTH, "458,168 540,160 628,155 705,144 725,138 745,127 785,125 795,128 800,137 835,132 885,165"),
  trace(SOUTH, "755,68 750,78 754,84 738,96 728,100 720,108 710,108 702,118 690,124 684,132 676,136 670,147"),
  trace(SOUTH, "710,145 708,158 718,168 728,174 740,184 746,192 760,200 770,212 782,222 790,228 792,238 802,248 808,260 812,262"),
  trace(SOUTH, "538,162 536,290 543,365"),
  trace(SOUTH, "628,155 652,240 662,265 658,280 662,296 668,325 672,335 775,331 780,340 784,320 802,320"),
  trace(SOUTH, "668,325 570,335 572,344 580,352 577,365"),
  trace(SOUTH, "306,106 459,101 466,108 458,114 454,124 478,122"),
  trace(SOUTH, "329,259 433,256"),
  trace(SOUTH, "313,234 328,236 329,303 336,316 342,330 350,345 346,360 348,375 340,390 338,404"),
];

const WATER = [
  trace(NORTH, `566,186 552,190 544,198 536,212 528,224 520,236 508,250 507,242 516,230 522,218 530,204 540,198 538,210 530,226 524,236 519,250 522,265 517,282 518,310 519,330
    524,350 532,368 540,376 548,376 556,366 562,352 568,345 570,328 568,312 562,300 558,290 557,276 560,262 559,246 566,236 564,228 574,226 580,216 584,224 590,210
    592,196 604,190 594,184 582,180`),
  trace(WEST, "110,512 116,512 115,520 110,523 116,528 114,538 111,534 112,524"),
];

const ISLANDS = [
  trace(NORTH, "457,110 466,101 480,94 476,101 464,109"),
  trace(NORTH, "572,192 578,188 582,192 578,198 572,198"),
  trace(NORTH, "975,355 990,345 984,338 1005,332 1020,322 1035,318 1028,326 1048,310 1038,326 1018,340 1000,348"),
  trace(NORTH, "1068,294 1080,288 1084,292 1072,296"),
  trace(NORTH, "1090,293 1098,288 1096,293"),
  trace(NORTH, "1098,170 1102,166 1102,173"),
  trace(WEST, "218,60 228,56 233,66 224,72 217,66"),
  trace(WEST, "133,703 145,706 155,710 170,712 150,711 140,708"),
  trace(WEST, "155,742 159,743 158,746"),
  trace(WEST, "192,744 200,748 200,752 195,750"),
  trace(WEST, "186,763 193,770 193,774 188,770"),
  trace(SOUTH, "812,588 822,586 832,578 848,574 842,582 830,586 820,590"),
  trace(SOUTH, "854,577 866,570 874,560 876,564 866,574"),
  "1872,370 1868,388 1874,394 1872,404 1880,398 1886,408 1884,418 1892,424 1898,412 1902,424 1908,430 1914,418 1920,426 1918,436 1928,430 1936,434 1940,420 1948,414 1946,404 1956,406 1960,394 1970,388 1966,370",
  "4060,1988 4090,1978 4110,1976 4128,1972 4124,1984 4105,1994 4080,2002 4062,2008 4058,1998",
  "4134,1974 4142,1970 4142,1976",
  "4034,2014 4038,2012 4038,2017",
];

const WAFFLE_RUNS: [string, number][] = [
  [trace(SOUTH, "502,382 510,376 522,373 534,372 546,370 554,370"), 9],
  [trace(SOUTH, "558,366 559,356"), 7],
  [trace(SOUTH, "566,372 580,368 592,364 606,361 620,363 634,366 648,372"), 9],
  [trace(SOUTH, "886,168 880,174 876,182 870,190"), 11],
  [trace(SOUTH, "911,146 911,154"), 9],
  [trace(SOUTH, "934,122 945,121"), 9],
  [trace(SOUTH, "853,216 847,226"), 9],
  [trace(SOUTH, "806,296 806,304"), 8],
  [trace(SOUTH, "808,332 813,343"), 9],
  [trace(SOUTH, "826,374 834,384"), 10],
  [trace(SOUTH, "854,410 856,432"), 9],
  [trace(SOUTH, "868,450 872,458"), 6],
  [trace(SOUTH, "887,502 887,512"), 7],
  [trace(SOUTH, "876,556 884,556"), 13],
  [trace(SOUTH, "765,428 766,436"), 10],
  [trace(SOUTH, "766,454 772,460 778,454"), 10],
  [trace(SOUTH, "780,474 784,482"), 8],
  [trace(SOUTH, "812,510 820,524"), 9],
  [trace(SOUTH, "299,427 304,427"), 13],
  [trace(NORTH, "724,354 730,348 744,343"), 9],
  [trace(NORTH, "934,518 946,524"), 9],
  [trace(NORTH, "940,416 948,426"), 6],
  [trace(NORTH, "890,464 892,470"), 6],
];

@customElement("map-canvas")
export class MapCanvas extends LitElement {
  static styles = css`
    :host { display: block; min-width: 0; min-height: 0; overflow: hidden; background: #fff; border: 1px solid #8e8e8e; border-right-color: #b4b4b4; }
    svg { display: block; width: 100%; height: 100%; }
    .land { fill: #7d8b8f; stroke: #4b5355; stroke-width: 2.5; stroke-linejoin: round; }
    .border { fill: none; stroke: #2d3234; stroke-width: 3; stroke-linejoin: round; }
    .water { fill: #fff; stroke: #4b5355; stroke-width: 2.5; }
    .ring { fill: none; stroke: #2a1c1c; stroke-linecap: round; stroke-linejoin: round; }
    .dots { fill: none; stroke: #c0343a; stroke-linecap: round; stroke-dasharray: 5 7; }
  `;
  render() {
    return html`<svg viewBox="1206 378 3279 2079" preserveAspectRatio="xMidYMid slice" role="img" aria-label="Map of the United States">
      <polygon class="land" points=${MAINLAND}></polygon>
      ${BORDERS.map((p) => svg`<polyline class="border" points=${p}/>`)}
      ${WATER.map((p) => svg`<polygon class="water" points=${p}/>`)}
      ${ISLANDS.map((p) => svg`<polygon class="land" points=${p}/>`)}
      ${WAFFLE_RUNS.map(([p, w]) => svg`<polyline class="ring" points=${p} stroke-width=${w}/><polyline class="dots" points=${p} stroke-width=${w - 4}/>`)}
    </svg>`;
  }
}

/* ---------- application ---------- */

const BROWSER_ITEMS: [string, string, boolean][] = [
  ["star", "Favorites", false], ["folder", "Home", true], ["folder", "/", true], ["folder", "/Volumes", true],
  ["geopackage", "GeoPackage", false], ["spatialite", "SpatiaLite", false], ["postgis", "PostGIS", false],
  ["mssql", "MSSQL", false], ["db2", "DB2", false], ["globe", "WMS/WMTS", false], ["globe", "", false],
];

@customElement("app-root")
export class AppRoot extends LitElement {
  static styles = css`
    :host {
      display: flex; box-sizing: border-box; height: 100vh; padding: 31px 56px 80px; overflow: hidden; background: #fff;
      font: 13px/20px Inter, "Noto Sans", sans-serif; color: #000;
    }
    * { box-sizing: border-box; }
    button, input, select { font: inherit; color: inherit; }
    .window {
      flex: 1; min-width: 0; display: flex; flex-direction: column; border-radius: 5px; background: #ddd;
      box-shadow: 0 0 1px rgba(0, 0, 0, 0.5), 0 20px 32px rgba(0, 0, 0, 0.5);
    }
    .title {
      height: 23px; flex: none; display: grid; grid-template-columns: 1fr auto 1fr; align-items: center; padding: 2px 8px 0;
      background: linear-gradient(#e9e7e9, #d2d0d2); border-bottom: 1px solid #b1afb1; border-radius: 5px 5px 0 0; color: #333;
    }
    .title h1 { margin: 0; font: inherit; }
    .lights { display: flex; gap: 8px; }
    .light { width: 12px; height: 12px; padding: 0; border-radius: 50%; border: 1px solid #e0383f; background: #ff424c; }
    .light.min { background: #ffb700; border-color: #e19f0b; }
    .light.max { background: #00d742; border-color: #10ae38; }
    .main { flex: 1; min-height: 0; display: grid; grid-template-columns: 345px 1fr; }
    .side { display: flex; flex-direction: column; min-height: 0; }
    .panel { display: flex; flex-direction: column; min-height: 0; }
    .browser { flex: 0 0 258px; padding-bottom: 1px; }
    .layers { flex: 1; }
    .head {
      flex: none; height: 22px; display: grid; grid-template-columns: 34px 1fr; align-items: center; border-bottom: 1px solid #a8a8a8;
      border-top: 1px solid #adadad; background: linear-gradient(#ededed, #cbcbcb);
    }
    .head h2 { margin: 0; font: 10px/20px Inter, sans-serif; text-align: center; }
    .headButtons { display: flex; gap: 4px; padding-left: 2px; }
    .headButtons button { padding: 0; border: 0; background: none; }
    .headButtons q-icon { width: 14px; height: 14px; }
    .tools { flex: none; height: 28px; display: flex; align-items: center; background: linear-gradient(#eee, #cacaca); }
    .tools button { width: 30px; height: 26px; padding: 0 2px 0 0; border: 0; background: none; display: flex; align-items: center; justify-content: center; flex: none; }
    .tools q-icon { width: 16px; height: 16px; }
    .tools .wide { width: 42px; padding: 0; justify-content: flex-end; gap: 1px; }
    .caret { width: 8px; height: 8px; margin-top: 8px; background: #5d5d5d; clip-path: polygon(0 0, 100% 0, 50% 100%); }
    ul { list-style: none; margin: 0; padding: 0; background: #fff; }
    .tree { flex: 1; min-height: 0; margin-right: 1px; overflow: hidden; border: 1px solid #9a9a9a; border-bottom-color: #b9b9b9; }
    .tree li { height: 20px; display: grid; grid-template-columns: 25px 22px 1fr; align-items: center; }
    .tree q-icon { width: 16px; height: 16px; }
    .twisty { width: 8px; height: 9px; margin-left: 7px; padding: 0; border: 0; background: #8b8b8b; clip-path: polygon(0 0, 100% 50%, 0 100%); }
    .layers .tools { height: 27px; }
    .list { flex: 1; margin: 1px 1px 1px 0; border: 1px solid #4c84c4; outline: 2px solid #7cb1ee; position: relative; z-index: 1; }
    .list li { height: 22px; display: flex; align-items: center; padding-left: 27px; font-weight: 700; }
    .list label { display: flex; align-items: center; }
    .list .selected { background: #64da38; color: #fff; text-decoration: underline; }
    .swatch { width: 16px; height: 16px; margin: 0 6px 0 13px; display: flex; align-items: center; justify-content: center; }
    .gray { background: #8da69a; border: 1px solid #7b9187; }
    .sand { background: #c3c2b8; border: 1px solid #cfcec6; }
    .dot { width: 6px; height: 6px; border-radius: 50%; background: #a8373d; border: 1px solid #5f3235; }
    .check { appearance: none; flex: none; width: 14px; height: 14px; margin: 0; border-radius: 3px; background: #2a8ffb; display: grid; place-items: center; }
    .check:checked::after { content: ""; width: 4px; height: 8px; margin-bottom: 2px; border: solid #fff; border-width: 0 2px 2px 0; transform: rotate(40deg); }

    .status {
      height: 44px; flex: none; display: flex; align-items: center; padding: 0 3px 1px 4px; border-top: 1px solid #7b7b7b;
      background: linear-gradient(#e6e6e6, #b4b4b4); border-radius: 0 0 5px 5px; white-space: nowrap;
    }
    .field { height: 21px; padding: 0 3px; border: 1px solid #a9a9a9; border-radius: 0; background: #fff; outline: 0; min-width: 0; }
    .locate { display: flex; align-items: center; gap: 6px; width: 200px; padding-left: 8px; }
    .locate q-icon { width: 13px; height: 13px; }
    .locate input { border: 0; padding: 0; outline: 0; width: 150px; background: none; }
    .locate input::placeholder { color: #777; opacity: 1; }
    .note { flex: 1; padding-left: 8px; min-width: 0; }
    .progress { width: 90px; height: 32px; display: flex; align-items: center; padding: 0 5px; margin-right: 8px; border: 1px solid #b0b0b0; background: #f1f1f1; }
    .bar { flex: 1; height: 6px; border-radius: 3px; background: linear-gradient(90deg, #2f8ff8, #5aaeff 35%, #2f8ff8 70%); }
    .status label { flex: none; }
    .labelText { margin-right: 4px; }
    .coord { width: 131px; margin-right: 1px; }
    .square { height: 26px; width: 26px; padding: 0; border: 1px solid #aaa; background: linear-gradient(#e9e9e9, #f7f7f7); display: flex; align-items: center; justify-content: center; flex: none; }
    .square q-icon { width: 16px; height: 16px; }
    .combo { position: relative; width: 121px; display: flex; margin-left: 3px; }
    .combo select { appearance: none; width: 100%; padding: 0 18px 0 2px; line-height: 19px; }
    .drop { position: absolute; right: 0; top: 0; width: 18px; height: 21px; border-radius: 0 4px 4px 0; background: linear-gradient(#5cabff, #0a6cff); pointer-events: none; display: grid; place-items: center; }
    .drop::after { content: ""; width: 5px; height: 5px; margin-bottom: 3px; border: solid #fff; border-width: 0 2px 2px 0; transform: rotate(45deg); }
    .gapLeft { margin-left: 8px; }
    .mag { width: 80px; }
    .rot { width: 75px; margin-left: 7px; }
    .stepper { width: 12px; height: 21px; margin: 0 10px 0 3px; border-radius: 5px; background: #fff; box-shadow: 0 0 1px 1px rgba(0, 0, 0, 0.2); display: flex; flex-direction: column; flex: none; }
    .stepper.tight { margin-right: 8px; }
    .stepper button { flex: 1; padding: 0; border: 0; background: none; display: grid; place-items: center; }
    .stepper button::after { content: ""; width: 4px; height: 4px; border: solid #444; border-width: 1px 0 0 1px; transform: rotate(45deg); }
    .stepper .down::after { transform: rotate(225deg); }
    .render { display: flex; align-items: center; gap: 4px; margin-right: 2px; }
    .crs { height: 30px; width: 107px; display: flex; align-items: center; gap: 4px; padding: 0 4px; border: 1px solid #adadad; background: linear-gradient(#e6e6e6, #f5f5f5); flex: none; }
    .crs q-icon { width: 16px; height: 16px; }
    .log { height: 30px; margin-left: 6px; }
  `;

  private head(title: string) {
    return html`<header class="head">
      <div class="headButtons">
        <button aria-label="Close ${title}"><q-icon name="close"></q-icon></button>
        <button aria-label="Float ${title}"><q-icon name="float"></q-icon></button>
      </div>
      <h2>${title}</h2>
    </header>`;
  }

  private tool(icon: string, title: string) {
    return html`<button title=${title} aria-label=${title}><q-icon name=${icon}></q-icon></button>`;
  }

  private layer(id: string, name: string, swatch: unknown, selected = false) {
    return html`<li class=${classMap({ selected })}>
      <input class="check" type="checkbox" id=${id} checked />
      <label for=${id}>${swatch}${name}</label>
    </li>`;
  }

  private stepper(what: string, tight = false) {
    return html`<span class=${classMap({ stepper: true, tight })}>
      <button aria-label="Increase ${what}"></button><button class="down" aria-label="Decrease ${what}"></button>
    </span>`;
  }

  render() {
    return html`<div class="window">
      <header class="title">
        <div class="lights">
          <button class="light" aria-label="Close"></button><button class="light min" aria-label="Minimize"></button><button class="light max" aria-label="Zoom"></button>
        </div>
        <h1>*Untitled Project - QGIS</h1>
      </header>
      <q-toolbar .tools=${PROJECT_TOOLS}></q-toolbar>
      <q-toolbar .tools=${LAYER_TOOLS}></q-toolbar>
      <main class="main">
        <div class="side">
          <section class="panel browser">
            ${this.head("Browser")}
            <div class="tools">
              ${this.tool("addLayer", "Add Selected Layers")}${this.tool("refresh", "Refresh")}${this.tool("funnel", "Filter Browser")}
              ${this.tool("collapse", "Collapse All")}${this.tool("info", "Properties")}
            </div>
            <ul class="tree">
              ${BROWSER_ITEMS.map(([icon, name, open]) => html`<li>
                ${open ? html`<button class="twisty" aria-label="Expand ${name}"></button>` : html`<span></span>`}
                <q-icon name=${icon}></q-icon><span>${name}</span>
              </li>`)}
            </ul>
          </section>
          <section class="panel layers">
            ${this.head("Layers")}
            <div class="tools">
              ${this.tool("brush", "Layer Styling")}${this.tool("group", "Add Group")}${this.tool("eye", "Map Themes")}${this.tool("funnel", "Filter Legend")}
              <button class="wide" title="Filter by Expression" aria-label="Filter by Expression"><q-icon name="epsilon"></q-icon><span class="caret"></span></button>
              ${this.tool("expand", "Expand All")}${this.tool("collapse", "Collapse All")}${this.tool("remove", "Remove Layer")}
            </div>
            <ul class="list">
              ${this.layer("count", "Count", html`<span class="swatch gray"></span>`, true)}
              ${this.layer("waffle", "wafflehouses", html`<span class="swatch"><span class="dot"></span></span>`)}
              ${this.layer("states", "cb_2016_us_state_20m", html`<span class="swatch sand"></span>`)}
            </ul>
          </section>
        </div>
        <map-canvas></map-canvas>
      </main>
      <footer class="status">
        <div class="field locate"><q-icon name="magnify"></q-icon><input type="text" aria-label="Locate" placeholder="Type to locate (⌘K)" /></div>
        <span class="note">1 legend entries removed.</span>
        <div class="progress" role="progressbar" aria-label="Rendering"><span class="bar"></span></div>
        <label class="labelText" for="coord">Coordinate</label>
        <input class="field coord" id="coord" type="text" value="-3620022,1599689" />
        <button class="square" aria-label="Toggle Extents"><q-icon name="mouse"></q-icon></button>
        <label class="gapLeft" for="scale">Scale</label>
        <span class="combo"><select class="field" id="scale"><option>1:21,582,296</option></select><span class="drop"></span></span>
        <button class="square" aria-label="Lock Scale"><q-icon name="lock"></q-icon></button>
        <label class="gapLeft labelText" for="mag">Magnifier</label>
        <input class="field mag" id="mag" type="text" value="100%" />
        ${this.stepper("magnifier")}
        <label class="labelText" for="rot">Rotation</label>
        <input class="field rot" id="rot" type="text" value="0.0 °" />
        ${this.stepper("rotation", true)}
        <label class="render"><input class="check" type="checkbox" checked />Render</label>
        <button class="crs"><q-icon name="crs"></q-icon>EPSG:5070</button>
        <button class="square log" aria-label="Messages"><q-icon name="message"></q-icon></button>
      </footer>
    </div>`;
  }
}
